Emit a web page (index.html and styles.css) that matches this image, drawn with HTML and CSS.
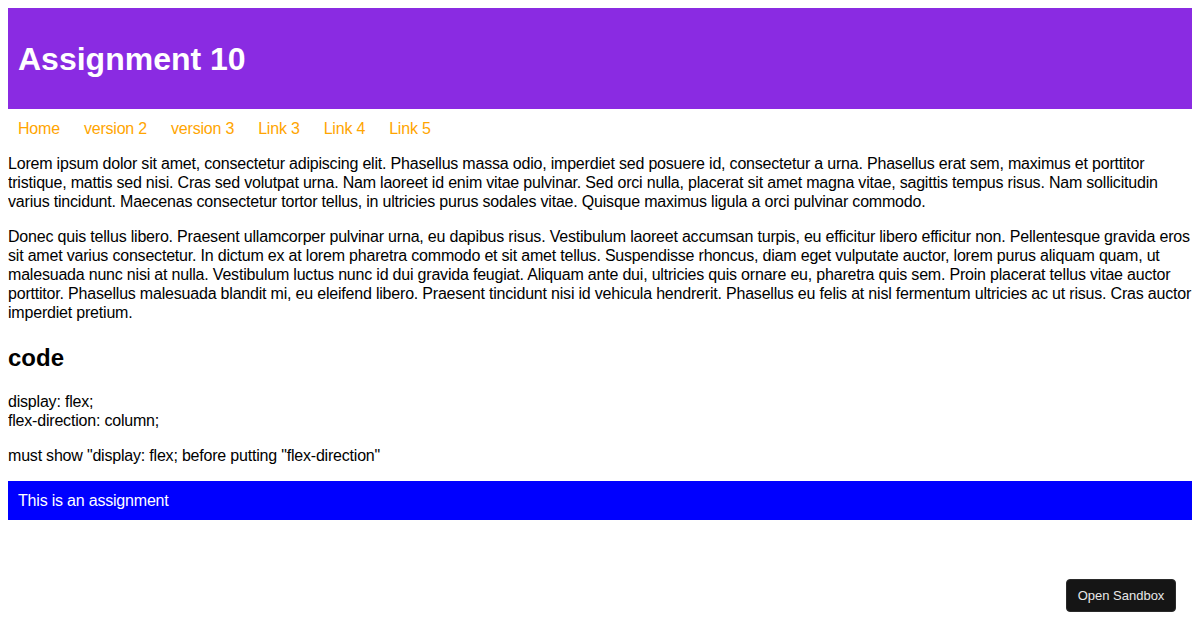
FILE: index.html
```html
<!DOCTYPE html>
<html lang="en">
<head>
<meta charset="utf-8">
<title>Assignment 10</title>
<link rel="stylesheet" href="styles.css">
</head>
<body>
<header class="site-header">
  <h1 class="site-title">Assignment 10</h1>
</header>
<nav class="site-nav">
  <a class="nav-link" href="#">Home</a>
  <a class="nav-link" href="#">version 2</a>
  <a class="nav-link" href="#">version 3</a>
  <a class="nav-link" href="#">Link 3</a>
  <a class="nav-link" href="#">Link 4</a>
  <a class="nav-link" href="#">Link 5</a>
</nav>
<main class="content">
  <p>Lorem ipsum dolor sit amet, consectetur adipiscing elit. Phasellus massa odio, imperdiet sed posuere id, consectetur a urna. Phasellus erat sem, maximus et porttitor tristique, mattis sed nisi. Cras sed volutpat urna. Nam laoreet id enim vitae pulvinar. Sed orci nulla, placerat sit amet magna vitae, sagittis tempus risus. Nam sollicitudin varius tincidunt. Maecenas consectetur tortor tellus, in ultricies purus sodales vitae. Quisque maximus ligula a orci pulvinar commodo.</p>
  <p>Donec quis tellus libero. Praesent ullamcorper pulvinar urna, eu dapibus risus. Vestibulum laoreet accumsan turpis, eu efficitur libero efficitur non. Pellentesque gravida eros sit amet varius consectetur. In dictum ex at lorem pharetra commodo et sit amet tellus. Suspendisse rhoncus, diam eget vulputate auctor, lorem purus aliquam quam, ut malesuada nunc nisi at nulla. Vestibulum luctus nunc id dui gravida feugiat. Aliquam ante dui, ultricies quis ornare eu, pharetra quis sem. Proin placerat tellus vitae auctor porttitor. Phasellus malesuada blandit mi, eu eleifend libero. Praesent tincidunt nisi id vehicula hendrerit. Phasellus eu felis at nisl fermentum ultricies ac ut risus. Cras auctor imperdiet pretium.</p>
  <h2 class="section-title">code</h2>
  <p>display: flex;<br>flex-direction: column;</p>
  <p>must show "display: flex; before putting "flex-direction"</p>
</main>
<footer class="site-footer">This is an assignment</footer>
<button class="sandbox-btn" type="button">Open Sandbox</button>
</body>
</html>
```

FILE: styles.css
```css
html, body {
  background: #ffffff;
}
body {
  margin: 8px;
  font-family: "Liberation Sans", Arial, Helvetica, sans-serif;
  font-size: 16px;
  line-height: 19px;
  letter-spacing: -0.2px;
  color: #000000;
}
.site-header {
  background: #8a2be2;
  padding: 10px;
}
.site-title {
  margin: 21.5px 0;
  font-size: 32px;
  font-weight: bold;
  line-height: 38px;
  letter-spacing: 0;
  color: #ffffff;
}
.site-nav {
  display: flex;
  gap: 24px;
  padding: 10px 10px 0;
}
.nav-link {
  color: #ffa500;
  text-decoration: none;
}
.content p {
  margin: 16px 0;
}
.section-title {
  margin: 21.5px 0 20px;
  font-size: 24px;
  line-height: 28px;
  letter-spacing: 0;
}
.site-footer {
  background: #0000ff;
  color: #ffffff;
  padding: 10px;
}
.sandbox-btn {
  position: fixed;
  right: 24px;
  bottom: 18px;
  width: 110px;
  height: 33px;
  background: #151515;
  color: #e8e8e8;
  border: 1px solid #2a2a2a;
  border-radius: 4px;
  font-family: "Liberation Sans", Arial, Helvetica, sans-serif;
  font-size: 13px;
  letter-spacing: 0;
  padding: 0;
}
```
